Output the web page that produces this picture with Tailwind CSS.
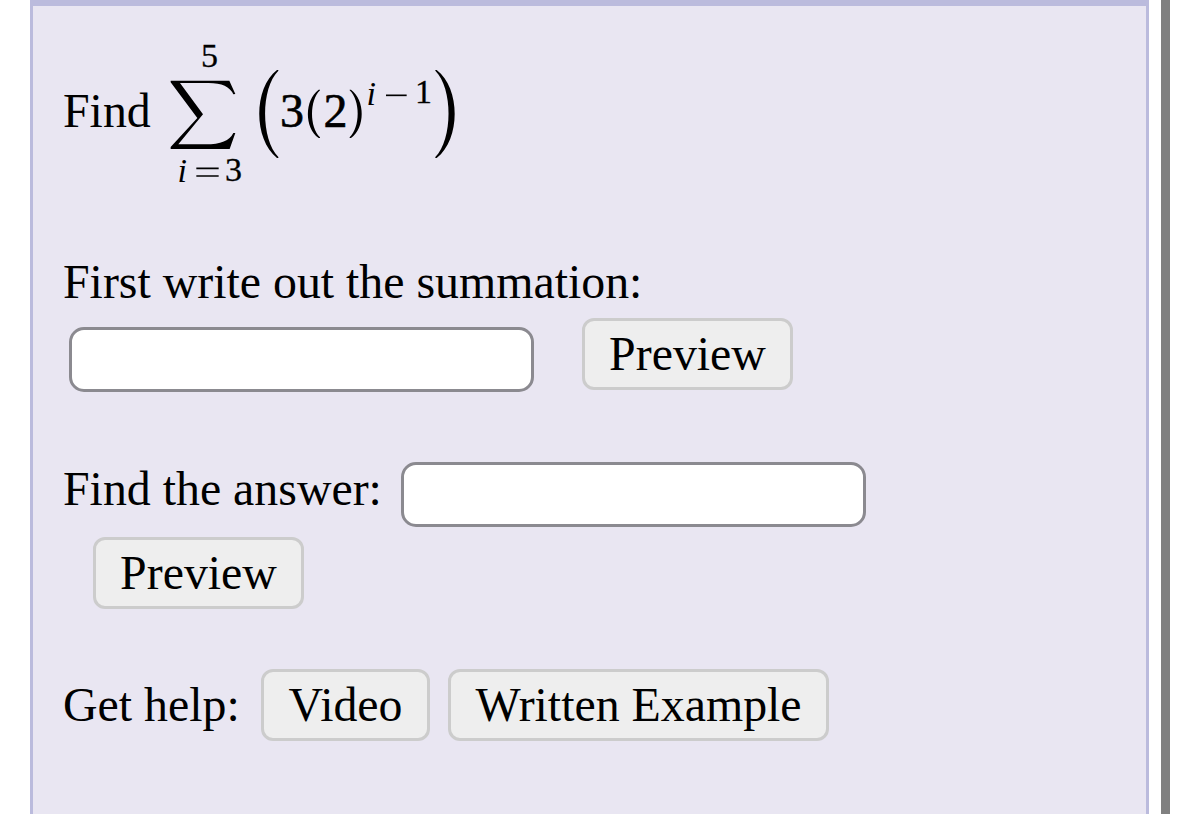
<!DOCTYPE html>
<html lang="en">
<head>
<meta charset="utf-8">
<title>Summation</title>
<script src="https://cdn.jsdelivr.net/npm/@tailwindcss/browser@4"></script>
</head>
<body class="bg-white">
<div class="flex h-[814px] overflow-hidden pl-[30px] font-['Liberation_Serif',serif] text-[47.85px] leading-[54px] text-black">
  <main class="flex w-[1119px] flex-col border-x-[3px] border-t-[6px] border-[#bbbbdd] bg-[#e9e6f2] pl-[30px]">
    <div class="flex pt-6">
      <span class="mt-[54px] w-[97px]">Find</span>
      <svg class="h-[170px] w-[310px]" viewBox="0 0 310 170" role="img" aria-label="Sum from i = 3 to 5 of 3(2)^(i-1)">
        <g font-family="Liberation Serif, serif" stroke="#000" stroke-width=".3">
          <text x="41" y="36.500" font-size="34">5</text>
          <text x="17.500" y="151.500" font-size="34" font-style="italic" stroke="none">i</text>
          <text x="65" y="151" font-size="34">3</text>
          <text x="120" y="96.500" font-size="48" stroke-width=".6">3</text>
          <text x="163.500" y="96.500" font-size="48" stroke-width=".6">2</text>
          <text x="206.500" y="74.500" font-size="34" font-style="italic" stroke="none">i</text>
          <text x="255" y="73" font-size="34">1</text>
        </g>
        <g transform="translate(-110 0) scale(.33333)">
          <path d="M362 152H538L556 192L550 193Q535 159 476 159H390L459 253L385 343H467Q534 343 550 309H556L539 357H362V351L442 264L362 157Z"/>
          <path d="M439 415H506M439 438H506" stroke="#000" stroke-width="5"/>
        </g>
        <g transform="translate(80 20) scale(.33333)">
          <path d="M111 60H115V62C62 114 62 268 115 321V324H111C40 268 40 115 111 60Z"/>
          <path d="M590 60H586V62C639 114 639 268 586 321V324H590C662 268 662 115 590 60Z"/>
          <path d="M236 119H240V121C208 151 208 232 240 262V264H236C193 233 193 151 236 119Z"/>
          <path d="M333 119H329V121C361 151 361 232 329 262V264H333C376 233 376 151 333 119Z"/>
          <path d="M438 136H500" stroke="#000" stroke-width="5"/>
        </g>
      </svg>
    </div>
    <div class="mt-[55px]">First write out the summation:</div>
    <div class="mt-[9px] flex items-start gap-12 pl-[6px]">
      <input aria-label="Summation" class="mt-[9px] h-[65px] w-[465px] rounded-[15px] border-[3px] border-[#8b8a90] bg-white">
      <button class="h-[72px] w-[211px] rounded-[12px] border-[3px] border-[#cccccc] bg-[#eeeeee] pt-[6px] pb-[6px]">Preview</button>
    </div>
    <div class="mt-[70px] flex items-start">
      <label for="answer" class="w-[338px]">Find the answer:</label>
      <input id="answer" class="h-[65px] w-[465px] rounded-[15px] border-[3px] border-[#8b8a90] bg-white">
    </div>
    <div class="mt-[10px] flex pl-[30px]">
      <button class="h-[72px] w-[211px] rounded-[12px] border-[3px] border-[#cccccc] bg-[#eeeeee] pt-[6px] pb-[6px]">Preview</button>
    </div>
    <div class="mt-[60px] flex">
      <span class="w-[198px] pt-[9px]">Get help:</span>
      <button class="h-[72px] w-[169px] rounded-[12px] border-[3px] border-[#cccccc] bg-[#eeeeee] pt-[6px] pb-[6px]">Video</button>
      <button class="ml-[18px] h-[72px] w-[381px] rounded-[12px] border-[3px] border-[#cccccc] bg-[#eeeeee] pt-[6px] pb-[6px]">Written Example</button>
    </div>
  </main>
  <div class="ml-3 w-[9px] bg-[#808080]"></div>
</div>
</body>
</html>
